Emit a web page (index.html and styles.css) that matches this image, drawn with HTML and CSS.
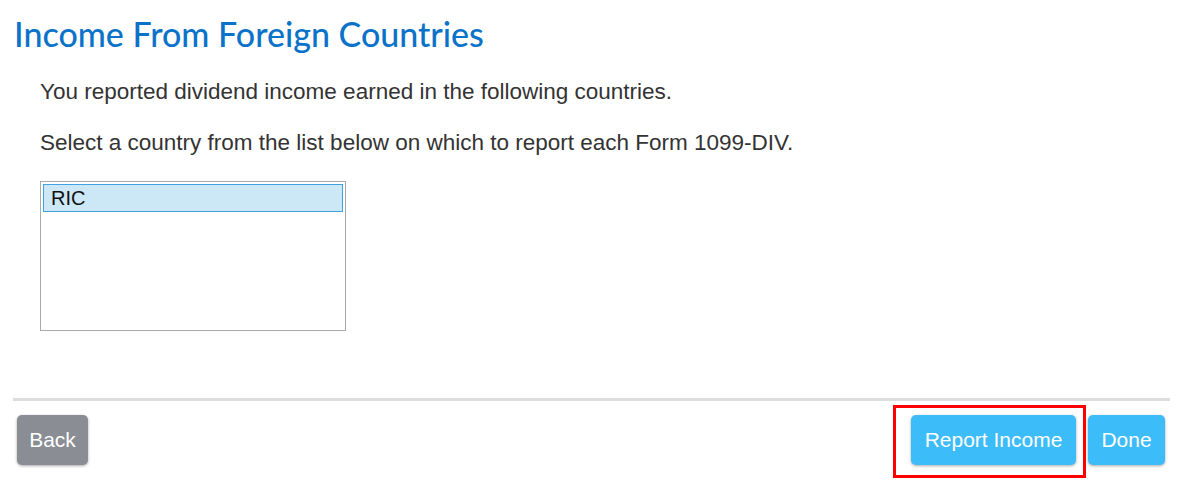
FILE: index.html
```html
<html>
<head>
  <title>Income From Foreign Countries</title>
  <meta charset="utf-8">
  <link rel="stylesheet" href="styles.css">
</head>
<body>

<h1 class="title">Income From Foreign Countries</h1>

<div class="content">
  <p>You reported dividend income earned in the following countries.</p>
  <p>Select a country from the list below on which to report each Form 1099-DIV.</p>

  <div class="listbox">
    <div class="option selected">RIC</div>
  </div>
</div>

<div class="footer">
  <button class="btn back">Back</button>
  <div class="right">
    <div class="highlight">
      <button class="btn primary">Report Income</button>
    </div>
    <button class="btn primary done">Done</button>
  </div>
</div>

</body>
</html>
```

FILE: styles.css
```css
body {
  margin: 0;
  padding: 0 21px 0 13px;
  font-family: "Liberation Sans", Arial, sans-serif;
  color: #333;
  background: #fff;
}

.title {
  margin: 0;
  padding-top: 14px;
  padding-left: 1px;
  font-family: Lato, "Open Sans", sans-serif;
  font-weight: 500;
  font-size: 34px;
  line-height: 40px;
  color: #0a73c9;
}

.content {
  padding-left: 27px;
  padding-top: 25px;
}

.content p {
  margin: 0 0 25px 0;
  font-size: 22.5px;
  line-height: 26px;
}

.listbox {
  border: 1px solid #aaa;
  padding: 2px;
  width: 300px;
  height: 144px;
}

.option {
  height: 26px;
  line-height: 26px;
  padding-left: 7px;
  font-size: 20px;
  color: #111;
}

.option.selected {
  background: #cce7f6;
  border: 1px solid #3ea2e3;
}

.footer {
  margin-top: 67px;
  border-top: 3px solid #ddd;
  padding: 14px 5px 0 4px;
  display: flex;
  justify-content: space-between;
  align-items: flex-start;
}

.right {
  display: flex;
  align-items: flex-start;
}

.highlight {
  border: 3px solid #f00;
  padding: 7px 7px 10px 15px;
  margin-top: -10px;
  margin-right: 2px;
}

.btn {
  height: 50px;
  border: none;
  border-radius: 5px;
  font-family: "Liberation Sans", Arial, sans-serif;
  font-size: 21px;
  color: #fff;
  padding: 0;
  box-shadow: 0 1px 3px rgba(0, 0, 0, 0.35);
}

.back {
  background: #8a8d94;
  width: 71px;
}

.primary {
  background: #3dbcfa;
  width: 165px;
}

.done {
  width: 77px;
}
```
